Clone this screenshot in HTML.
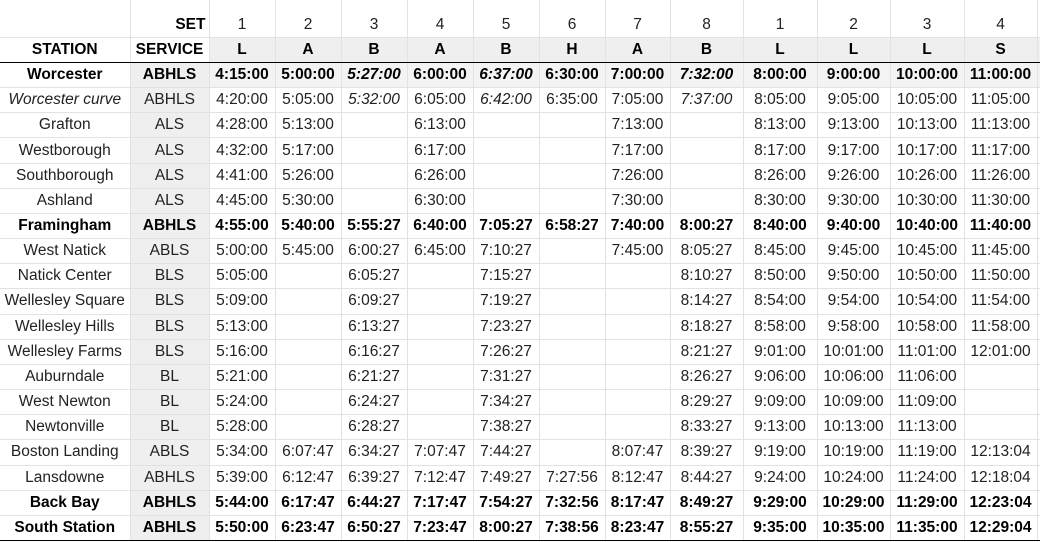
<!DOCTYPE html>
<html><head><meta charset="utf-8"><style>
html,body{margin:0;padding:0;background:#fff;width:1040px;height:542px;overflow:hidden}
table{border-collapse:collapse;table-layout:fixed;width:1047px;font-family:"Liberation Sans",Arial,sans-serif;font-size:15.5px;color:#222;position:absolute;left:0;top:0}
td{border:1px solid #e2e2e2;padding:0;text-align:center;white-space:nowrap;overflow:hidden;height:24.16px;line-height:24px}
tr.h1 td{height:37px;vertical-align:bottom;line-height:24px;border-top:none}
tr.h2 td{height:24px;border-bottom:1.5px solid #000;font-weight:bold;color:#000}
tr.h2 td.g{background:#efefef}
td.s{background:#efefef}
td.t{border-left:1.5px solid #000}
tr.b td{font-weight:bold;color:#000}
tr.w td.x{background:#f3f3f3}
i{font-style:italic}
tr.last td{border-bottom:1.5px solid #000}
td:first-child{border-left:none}
</style></head><body>
<table>
<colgroup><col style="width:130px"><col style="width:79px"><col style="width:66px"><col style="width:66px"><col style="width:66px"><col style="width:66px"><col style="width:66px"><col style="width:66px"><col style="width:65px"><col style="width:73px"><col style="width:74px"><col style="width:73px"><col style="width:74px"><col style="width:73px"><col style="width:10px"></colgroup>
<tr class="h1"><td></td><td style="text-align:right;padding-right:3px;font-weight:bold;color:#000">SET</td><td>1</td><td>2</td><td>3</td><td>4</td><td>5</td><td>6</td><td>7</td><td>8</td><td>1</td><td>2</td><td>3</td><td>4</td><td></td></tr>
<tr class="h2"><td>STATION</td><td>SERVICE</td><td class="g">L</td><td class="g">A</td><td class="g">B</td><td class="g">A</td><td class="g">B</td><td class="g">H</td><td class="g">A</td><td class="g">B</td><td class="g">L</td><td class="g">L</td><td class="g">L</td><td class="g">S</td><td class="g"></td></tr>
<tr class="b w"><td>Worcester</td><td class="s">ABHLS</td><td class="t x">4:15:00</td><td class="x">5:00:00</td><td class="x"><i>5:27:00</i></td><td class="x">6:00:00</td><td class="x"><i>6:37:00</i></td><td class="x">6:30:00</td><td class="x">7:00:00</td><td class="x"><i>7:32:00</i></td><td class="x">8:00:00</td><td class="x">9:00:00</td><td class="x">10:00:00</td><td class="x">11:00:00</td><td class="x"></td></tr>
<tr><td><i>Worcester curve</i></td><td class="s">ABHLS</td><td class="t">4:20:00</td><td>5:05:00</td><td><i>5:32:00</i></td><td>6:05:00</td><td><i>6:42:00</i></td><td>6:35:00</td><td>7:05:00</td><td><i>7:37:00</i></td><td>8:05:00</td><td>9:05:00</td><td>10:05:00</td><td>11:05:00</td><td></td></tr>
<tr><td>Grafton</td><td class="s">ALS</td><td class="t">4:28:00</td><td>5:13:00</td><td></td><td>6:13:00</td><td></td><td></td><td>7:13:00</td><td></td><td>8:13:00</td><td>9:13:00</td><td>10:13:00</td><td>11:13:00</td><td></td></tr>
<tr><td>Westborough</td><td class="s">ALS</td><td class="t">4:32:00</td><td>5:17:00</td><td></td><td>6:17:00</td><td></td><td></td><td>7:17:00</td><td></td><td>8:17:00</td><td>9:17:00</td><td>10:17:00</td><td>11:17:00</td><td></td></tr>
<tr><td>Southborough</td><td class="s">ALS</td><td class="t">4:41:00</td><td>5:26:00</td><td></td><td>6:26:00</td><td></td><td></td><td>7:26:00</td><td></td><td>8:26:00</td><td>9:26:00</td><td>10:26:00</td><td>11:26:00</td><td></td></tr>
<tr><td>Ashland</td><td class="s">ALS</td><td class="t">4:45:00</td><td>5:30:00</td><td></td><td>6:30:00</td><td></td><td></td><td>7:30:00</td><td></td><td>8:30:00</td><td>9:30:00</td><td>10:30:00</td><td>11:30:00</td><td></td></tr>
<tr class="b"><td>Framingham</td><td class="s">ABHLS</td><td class="t">4:55:00</td><td>5:40:00</td><td>5:55:27</td><td>6:40:00</td><td>7:05:27</td><td>6:58:27</td><td>7:40:00</td><td>8:00:27</td><td>8:40:00</td><td>9:40:00</td><td>10:40:00</td><td>11:40:00</td><td></td></tr>
<tr><td>West Natick</td><td class="s">ABLS</td><td class="t">5:00:00</td><td>5:45:00</td><td>6:00:27</td><td>6:45:00</td><td>7:10:27</td><td></td><td>7:45:00</td><td>8:05:27</td><td>8:45:00</td><td>9:45:00</td><td>10:45:00</td><td>11:45:00</td><td></td></tr>
<tr><td>Natick Center</td><td class="s">BLS</td><td class="t">5:05:00</td><td></td><td>6:05:27</td><td></td><td>7:15:27</td><td></td><td></td><td>8:10:27</td><td>8:50:00</td><td>9:50:00</td><td>10:50:00</td><td>11:50:00</td><td></td></tr>
<tr><td>Wellesley Square</td><td class="s">BLS</td><td class="t">5:09:00</td><td></td><td>6:09:27</td><td></td><td>7:19:27</td><td></td><td></td><td>8:14:27</td><td>8:54:00</td><td>9:54:00</td><td>10:54:00</td><td>11:54:00</td><td></td></tr>
<tr><td>Wellesley Hills</td><td class="s">BLS</td><td class="t">5:13:00</td><td></td><td>6:13:27</td><td></td><td>7:23:27</td><td></td><td></td><td>8:18:27</td><td>8:58:00</td><td>9:58:00</td><td>10:58:00</td><td>11:58:00</td><td></td></tr>
<tr><td>Wellesley Farms</td><td class="s">BLS</td><td class="t">5:16:00</td><td></td><td>6:16:27</td><td></td><td>7:26:27</td><td></td><td></td><td>8:21:27</td><td>9:01:00</td><td>10:01:00</td><td>11:01:00</td><td>12:01:00</td><td></td></tr>
<tr><td>Auburndale</td><td class="s">BL</td><td class="t">5:21:00</td><td></td><td>6:21:27</td><td></td><td>7:31:27</td><td></td><td></td><td>8:26:27</td><td>9:06:00</td><td>10:06:00</td><td>11:06:00</td><td></td><td></td></tr>
<tr><td>West Newton</td><td class="s">BL</td><td class="t">5:24:00</td><td></td><td>6:24:27</td><td></td><td>7:34:27</td><td></td><td></td><td>8:29:27</td><td>9:09:00</td><td>10:09:00</td><td>11:09:00</td><td></td><td></td></tr>
<tr><td>Newtonville</td><td class="s">BL</td><td class="t">5:28:00</td><td></td><td>6:28:27</td><td></td><td>7:38:27</td><td></td><td></td><td>8:33:27</td><td>9:13:00</td><td>10:13:00</td><td>11:13:00</td><td></td><td></td></tr>
<tr><td>Boston Landing</td><td class="s">ABLS</td><td class="t">5:34:00</td><td>6:07:47</td><td>6:34:27</td><td>7:07:47</td><td>7:44:27</td><td></td><td>8:07:47</td><td>8:39:27</td><td>9:19:00</td><td>10:19:00</td><td>11:19:00</td><td>12:13:04</td><td></td></tr>
<tr><td>Lansdowne</td><td class="s">ABHLS</td><td class="t">5:39:00</td><td>6:12:47</td><td>6:39:27</td><td>7:12:47</td><td>7:49:27</td><td>7:27:56</td><td>8:12:47</td><td>8:44:27</td><td>9:24:00</td><td>10:24:00</td><td>11:24:00</td><td>12:18:04</td><td></td></tr>
<tr class="b"><td>Back Bay</td><td class="s">ABHLS</td><td class="t">5:44:00</td><td>6:17:47</td><td>6:44:27</td><td>7:17:47</td><td>7:54:27</td><td>7:32:56</td><td>8:17:47</td><td>8:49:27</td><td>9:29:00</td><td>10:29:00</td><td>11:29:00</td><td>12:23:04</td><td></td></tr>
<tr class="b last"><td>South Station</td><td class="s">ABHLS</td><td class="t">5:50:00</td><td>6:23:47</td><td>6:50:27</td><td>7:23:47</td><td>8:00:27</td><td>7:38:56</td><td>8:23:47</td><td>8:55:27</td><td>9:35:00</td><td>10:35:00</td><td>11:35:00</td><td>12:29:04</td><td></td></tr>
</table>
</body></html>
